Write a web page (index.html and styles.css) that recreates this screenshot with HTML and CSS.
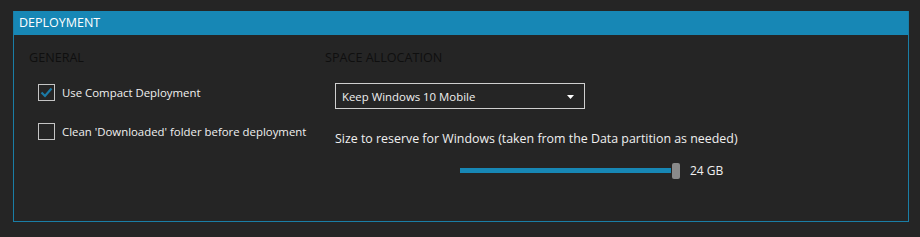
FILE: index.html
```html
<!DOCTYPE html>
<html lang="en">
<head>
  <meta charset="UTF-8" />
  <title>Deployment</title>
  <link rel="stylesheet" href="styles.css">
</head>
<body>
  <div class="panel">
    <div class="panel-header">DEPLOYMENT</div>
    <div class="panel-body">
      <div class="col col-general">
        <h3 class="section-title">GENERAL</h3>
        <label class="check-row">
          <span class="checkbox checked">
            <svg width="13" height="11" viewBox="0 0 13 11"><path d="M1.5 5.5 L5 9 L11.5 1.5" fill="none" stroke="#1b7aa6" stroke-width="2.2"/></svg>
          </span>
          <span>Use Compact Deployment</span>
        </label>
        <label class="check-row">
          <span class="checkbox"></span>
          <span>Clean 'Downloaded' folder before deployment</span>
        </label>
      </div>
      <div class="col col-space">
        <h3 class="section-title">SPACE ALLOCATION</h3>
        <div class="dropdown">
          <span>Keep Windows 10 Mobile</span>
          <svg class="arrow" width="7" height="4" viewBox="0 0 7 4"><path d="M0 0 H7 L3.5 4 Z" fill="#fff"/></svg>
        </div>
        <p class="hint">Size to reserve for Windows (taken from the Data partition as needed)</p>
        <div class="slider-row">
          <div class="slider">
            <div class="track"></div>
            <div class="thumb"></div>
          </div>
          <span class="slider-value">24 GB</span>
        </div>
      </div>
    </div>
  </div>
</body>
</html>
```

FILE: styles.css
```css
body {
  margin: 0;
  padding: 11px 0 0 13px;
  background-color: #252525;
  color: #f0f0f0;
  font-family: 'Open Sans', 'Noto Sans', sans-serif;
  font-size: 12px;
}

.panel {
  width: 894px;
  height: 210px;
  border: 1px solid #1a7ea6;
  border-top: none;
}

.panel-header {
  background-color: #1787b5;
  height: 24px;
  line-height: 23px;
  padding-left: 5px;
  color: #fff;
  font-size: 12.5px;
}

.panel-body {
  display: flex;
}

.col-general {
  width: 296px;
  padding-left: 15px;
}

.section-title {
  margin: 15px 0 0;
  font-size: 12.6px;
  font-weight: normal;
  line-height: 16px;
  color: #0f0f0f;
}

.check-row {
  display: flex;
  align-items: center;
  gap: 7px;
  margin-left: 9px;
  height: 18px;
  font-size: 11.4px;
}
.col-general .section-title + .check-row {
  margin-top: 17px;
}
.check-row + .check-row {
  margin-top: 21px;
}

.checkbox {
  width: 15px;
  height: 15px;
  border: 1px solid #c4c4c4;
  display: flex;
  align-items: center;
  justify-content: center;
}

.dropdown {
  margin: 17px 0 0 10px;
  width: 232px;
  height: 24px;
  border: 1px solid #cfcfcf;
  display: flex;
  align-items: center;
  justify-content: space-between;
  padding: 0 10px 0 6px;
  font-size: 11.4px;
}

.arrow {
  margin-top: 1px;
}

.hint {
  margin: 22px 0 0 10px;
  line-height: 16px;
  font-size: 12.4px;
}

.slider-row {
  display: flex;
  align-items: center;
  margin: 15px 0 0 135px;
  gap: 10px;
}

.slider {
  position: relative;
  width: 220px;
  height: 16px;
}

.track {
  position: absolute;
  left: 0;
  right: 9px;
  top: 5px;
  height: 5px;
  background-color: #1787b5;
}

.thumb {
  position: absolute;
  right: 0;
  top: 0;
  width: 8px;
  height: 16px;
  border-radius: 2px;
  background-color: #8a8a8a;
}
```
